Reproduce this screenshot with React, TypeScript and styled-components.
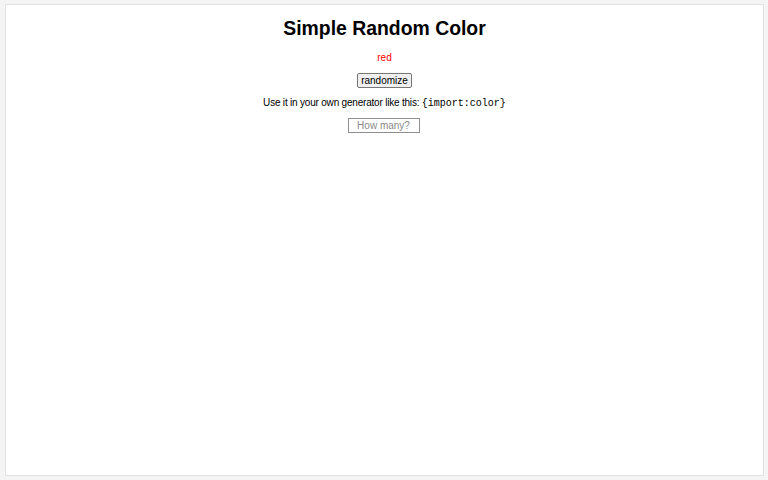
import React from "react"
import styled, { createGlobalStyle } from "styled-components"

const GlobalStyle = createGlobalStyle`
  html, body {
    margin: 0;
    padding: 0;
    background: #f4f4f4;
    font-family: "Liberation Sans", Arial, sans-serif;
  }
`

const Page = styled.div`
  padding: 4px 4px 4px 5px;
  height: 480px;
  box-sizing: border-box;
`

const Card = styled.div`
  background: #ffffff;
  border: 1px solid #e2e2e2;
  height: 100%;
  box-sizing: border-box;
  display: flex;
  flex-direction: column;
  align-items: center;
  padding-top: 12px;
`

const Title = styled.h1`
  margin: 0;
  font-size: 19.4px;
  font-weight: bold;
  color: #000;
  line-height: 22px;
`

const Result = styled.div`
  margin-top: 13px;
  font-size: 10px;
  line-height: 12px;
  color: #ff0000;
`

const Button = styled.button`
  margin-top: 9px;
  font-family: "Liberation Sans", Arial, sans-serif;
  font-size: 10px;
  height: 15px;
  padding: 0 3px;
  background: #efefef;
  border: 1px solid #767676;
  border-radius: 2px;
  color: #000;
`

const Hint = styled.p`
  margin: 9px 0 0;
  font-size: 10px;
  line-height: 12px;
  color: #000;
  letter-spacing: -0.2px;
`

const Code = styled.code`
  font-family: "Liberation Mono", "Courier New", monospace;
  font-size: 10px;
  letter-spacing: 0;
`

const Input = styled.input`
  margin: 8px 2px 0 0;
  width: 72px;
  height: 15px;
  box-sizing: border-box;
  border: 1px solid #8f8f8f;
  font-family: "Liberation Sans", Arial, sans-serif;
  font-size: 10px;
  text-align: center;
  padding: 0;
  &::placeholder {
    color: #8a8a8a;
  }
`

const App: React.FC = () => {
  const colors = ["red", "blue", "green", "orange", "purple", "yellow"]
  const [color, setColor] = React.useState("red")
  return (
    <Page>
      <GlobalStyle />
      <Card>
        <Title>Simple Random Color</Title>
        <Result style={{ color }}>{color}</Result>
        <Button
          onClick={() =>
            setColor(colors[Math.floor(Math.random() * colors.length)])
          }
        >
          randomize
        </Button>
        <Hint>
          Use it in your own generator like this: <Code>{"{import:color}"}</Code>
        </Hint>
        <Input placeholder="How many?" />
      </Card>
    </Page>
  )
}

export default App
